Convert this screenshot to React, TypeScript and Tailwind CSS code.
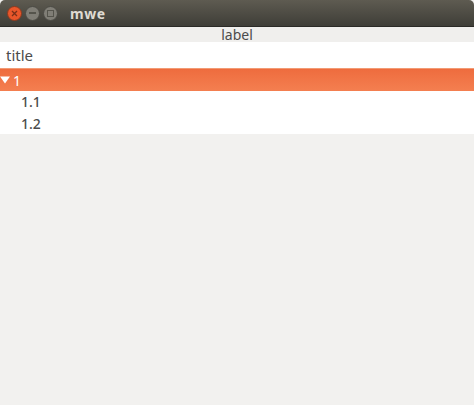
export default function App() {
  const font = { fontFamily: '"Noto Sans", "Open Sans", sans-serif' };
  return (
    <div className="w-[474px] h-[405px] flex flex-col bg-[#f2f1ef] overflow-hidden text-[#4c4c4c] text-[14px]" style={font}>
      <div className="h-[27px] shrink-0 flex items-center bg-gradient-to-b from-[#5e5b51] to-[#3f3e38] border-b border-[#2b2a27] rounded-t-[5px]">
        <div className="flex items-center gap-[3px] pl-[7px]">
          <div className="w-[15px] h-[15px] rounded-full bg-[#e9562a] border border-[#8a3a20] flex items-center justify-center">
            <svg width="7" height="7" viewBox="0 0 7 7"><path d="M1 1L6 6M6 1L1 6" stroke="#7a3018" strokeWidth="1.3" /></svg>
          </div>
          <div className="w-[15px] h-[15px] rounded-full bg-[#807e76] border border-[#4b4a44] flex items-center justify-center">
            <div className="w-[7px] h-[1.5px] bg-[#55544c]" />
          </div>
          <div className="w-[15px] h-[15px] rounded-full bg-[#807e76] border border-[#4b4a44] flex items-center justify-center">
            <div className="w-[7px] h-[7px] border border-[#55544c]" />
          </div>
        </div>
        <span className="ml-[12px] text-[14px] font-bold text-[#dfdbd2] tracking-[0.5px]">mwe</span>
      </div>
      <div className="h-[15px] shrink-0 flex items-center justify-center leading-none bg-[#f0efed]">label</div>
      <div className="h-[26px] shrink-0 flex items-center pl-[6px] bg-white text-[15px]">title</div>
      <div className="h-[23px] shrink-0 flex items-center bg-gradient-to-b from-[#ee6c3e] to-[#f47f50] border-t border-[#f29a74] text-white">
        <svg width="10" height="8" viewBox="0 0 10 8"><path d="M0 0.5H10L5 7.5Z" fill="#ffffff" /></svg>
        <span className="ml-[3px]">1</span>
      </div>
      <div className="h-[21px] shrink-0 flex items-center pl-[21px] bg-white font-medium">1.1</div>
      <div className="h-[22px] shrink-0 flex items-center pl-[21px] bg-white font-medium">1.2</div>
    </div>
  );
}
